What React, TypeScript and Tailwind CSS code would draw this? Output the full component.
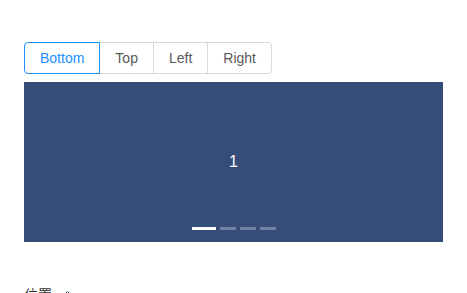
import { useState } from "react";

const positions = ["Bottom", "Top", "Left", "Right"];

export default function App() {
	const [pos, setPos] = useState("Bottom");

	return (
		<div className="relative h-[293px] w-[467px] overflow-hidden bg-white font-['Liberation_Sans',Arial,sans-serif] text-[14px] text-[rgba(0,0,0,0.85)]">
			<div className="px-6 pt-[42px]">
				<div className="flex">
					{positions.map((p) => {
						const active = p === pos;
						return (
							<button
								key={p}
								onClick={() => setPos(p)}
								className={
									"relative -ml-px h-8 border px-[15px] leading-[30px] first:ml-0 first:rounded-l-[4px] last:rounded-r-[4px] " +
									(active ? "z-10 border-[#1890ff] text-[#1890ff]" : "border-[#d9d9d9] text-[#595959]")
								}
							>
								{p}
							</button>
						);
					})}
				</div>
				<div className="relative mt-2 flex h-40 w-[419px] items-center justify-center bg-[#364d79] text-[16px] text-white">
					1
					<div className="absolute bottom-3 left-0 right-0 flex justify-center gap-1">
						<span className="h-[3px] w-6 bg-white" />
						<span className="h-[3px] w-4 bg-white/30" />
						<span className="h-[3px] w-4 bg-white/30" />
						<span className="h-[3px] w-4 bg-white/30" />
					</div>
				</div>
			</div>
			<div className="mt-[42px] flex items-center">
				<div className="h-px w-4 bg-[#e8e8e8]" />
				<span className="ml-2 flex items-center gap-2 font-['Noto_Sans_CJK_SC',sans-serif] text-[14px] text-[rgba(0,0,0,0.85)]">
					位置
					<svg width="12" height="12" viewBox="0 0 24 24" fill="none" stroke="#314659" strokeWidth="2">
						<path d="M4 20h4L19 9l-4-4L4 16v4z" />
					</svg>
				</span>
				<div className="ml-2 h-px flex-1 bg-[#e8e8e8]" />
			</div>
		</div>
	);
}
